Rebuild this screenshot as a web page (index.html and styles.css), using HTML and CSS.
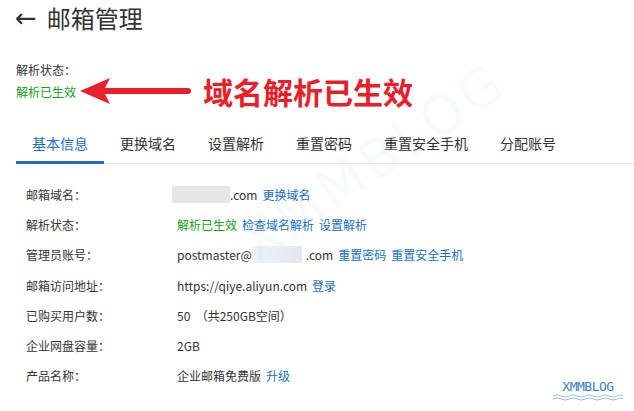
FILE: index.html
```html
<!DOCTYPE html>
<html>
<head>
  <title>邮箱管理</title>
  <link rel="stylesheet" href="styles.css">
</head>
<body>

<div class="page">
  <div class="header">
    <span class="back">←</span>
    <h1>邮箱管理</h1>
  </div>

  <div class="status">
    <div class="status-label">解析状态：</div>
    <div class="status-row">
      <span class="ok">解析已生效</span>
      <svg class="arrow" width="112" height="30" viewBox="0 0 112 30">
        <path d="M0 15 L30 2 L25 12 L108 12 A3 3 0 0 1 108 18 L25 18 L30 28 Z" fill="#e8202a"/>
      </svg>
      <span class="callout">域名解析已生效</span>
    </div>
  </div>

  <div class="tabs">
    <div class="tab active">基本信息</div>
    <div class="tab">更换域名</div>
    <div class="tab">设置解析</div>
    <div class="tab">重置密码</div>
    <div class="tab">重置安全手机</div>
    <div class="tab">分配账号</div>
  </div>

  <div class="info">
    <div class="row">
      <div class="label">邮箱域名：</div>
      <div class="value"><span class="mask first"></span>.com <a>更换域名</a></div>
    </div>
    <div class="row">
      <div class="label">解析状态：</div>
      <div class="value"><span class="ok">解析已生效</span> <a>检查域名解析</a> <a>设置解析</a></div>
    </div>
    <div class="row">
      <div class="label">管理员账号：</div>
      <div class="value">postmaster@<span class="mask second"></span>.com <a>重置密码</a> <a>重置安全手机</a></div>
    </div>
    <div class="row">
      <div class="label">邮箱访问地址：</div>
      <div class="value">https://qiye.aliyun.com <a>登录</a></div>
    </div>
    <div class="row">
      <div class="label">已购买用户数：</div>
      <div class="value">50 &nbsp;（共250GB空间）</div>
    </div>
    <div class="row">
      <div class="label">企业网盘容量：</div>
      <div class="value">2GB</div>
    </div>
    <div class="row">
      <div class="label">产品名称：</div>
      <div class="value">企业邮箱免费版 <a>升级</a></div>
    </div>
  </div>

  <div class="watermark">XMMBLOG</div>
  <div class="logo">
    <span>XMMBLOG</span>
    <svg width="70" height="8" viewBox="0 0 70 8">
      <path d="M0 2 Q4 0 8 2 T16 2 T24 2 T32 2 T40 2 T48 2 T56 2 T64 2 T72 2" fill="none" stroke="#9cc3e6" stroke-width="1"/>
      <path d="M0 5 Q4 3 8 5 T16 5 T24 5 T32 5 T40 5 T48 5 T56 5 T64 5 T72 5" fill="none" stroke="#9cc3e6" stroke-width="1"/>
    </svg>
  </div>
</div>

</body>
</html>
```

FILE: styles.css
```css
body { margin: 0; background: #fff; color: #333; font-family: "Noto Sans CJK SC", "Noto Sans", sans-serif; }
.page { position: relative; width: 634px; height: 411px; overflow: hidden; }
.header { display: flex; align-items: center; height: 36px; padding-left: 15px; }
.back { font-size: 26px; line-height: 36px; margin-right: 10px; font-family: "DejaVu Sans", sans-serif; }
h1 { margin: 0; font-size: 24px; font-weight: normal; line-height: 36px; }
.status { padding: 24px 0 0 16px; font-size: 12px; }
.status-label { line-height: 20px; }
.status-row { display: flex; align-items: center; height: 22px; }
.ok { color: #1a9c1a; }
.arrow { margin-left: 4px; }
.callout { margin-left: 11px; font-size: 30px; font-weight: bold; color: #e8202a; line-height: 22px; white-space: nowrap; }
.tabs { display: flex; margin: 24px 0 0 16px; border-bottom: 1px solid #e3e6ea; height: 37px; }
.tab { font-size: 14px; line-height: 34px; padding: 0 16px; white-space: nowrap; }
.tab.active { color: #1a6fc4; border-bottom: 3px solid #1a6fc4; margin-bottom: -1px; }
.info { padding: 15px 0 0 26px; font-size: 12px; }
.row { display: flex; height: 30.3px; align-items: center; }
.label { width: 151px; }
.value { display: flex; align-items: center; white-space: nowrap; }
.value a { color: #1a6fc4; margin-left: 5px; }
.mask { display: inline-block; height: 17px; background: #e6e6e6; }
.mask.first { width: 58px; margin-left: -5px; }
.mask.second { width: 50px; background: linear-gradient(90deg, #eef3f8, #e4e8ec); margin-right: 4px; }
.watermark { position: absolute; left: 220px; top: 130px; font-size: 54px; font-family: "DejaVu Sans", sans-serif; color: rgba(80, 130, 190, 0.045); transform: rotate(-34deg); letter-spacing: 4px; }
.logo { position: absolute; left: 553px; top: 380px; display: flex; flex-direction: column; align-items: center; }
.logo span { font-family: "DejaVu Sans Mono", monospace; font-size: 13px; color: #3a7fc8; line-height: 14px; letter-spacing: -0.5px; }
```
